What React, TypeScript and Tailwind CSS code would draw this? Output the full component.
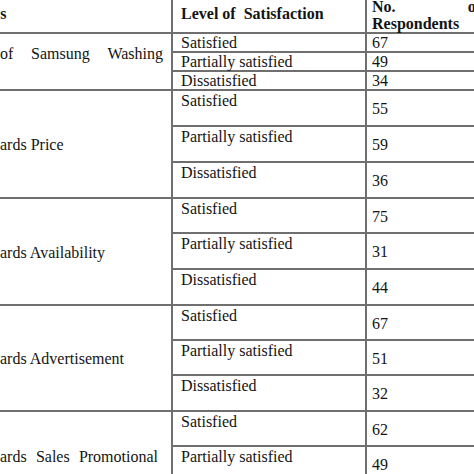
type Row = { level: string; count: string; h: string };

type Group = {
  kind: "justified" | "single";
  words: string[];
  shift: string; // where the visible line starts inside the clipped first column
  width: string;
  twoLines: boolean;
  rows: Row[];
};

// Each group of three answers; heights mirror the scanned table rows.
const groups: Group[] = [
  {
    kind: "justified",
    words: ["of", "Samsung", "Washing"],
    shift: "ml-0",
    width: "w-[163px]",
    twoLines: true,
    rows: [
      { level: "Satisfied", count: "67", h: "h-[19px]" },
      { level: "Partially satisfied", count: "49", h: "h-[19px]" },
      { level: "Dissatisfied", count: "34", h: "h-[19px]" },
    ],
  },
  {
    kind: "single",
    words: ["towards Price"],
    shift: "-ml-[24px]",
    width: "w-auto",
    twoLines: false,
    rows: [
      { level: "Satisfied", count: "55", h: "h-[36px]" },
      { level: "Partially satisfied", count: "59", h: "h-[36px]" },
      { level: "Dissatisfied", count: "36", h: "h-[36px]" },
    ],
  },
  {
    kind: "single",
    words: ["towards Availability"],
    shift: "-ml-[24px]",
    width: "w-auto",
    twoLines: false,
    rows: [
      { level: "Satisfied", count: "75", h: "h-[35px]" },
      { level: "Partially satisfied", count: "31", h: "h-[36px]" },
      { level: "Dissatisfied", count: "44", h: "h-[36px]" },
    ],
  },
  {
    kind: "single",
    words: ["towards Advertisement"],
    shift: "-ml-[24px]",
    width: "w-auto",
    twoLines: false,
    rows: [
      { level: "Satisfied", count: "67", h: "h-[35px]" },
      { level: "Partially satisfied", count: "51", h: "h-[35px]" },
      { level: "Dissatisfied", count: "32", h: "h-[36px]" },
    ],
  },
  {
    kind: "justified",
    words: ["towards", "Sales", "Promotional"],
    shift: "-ml-[24px]",
    width: "w-[182px]",
    twoLines: true,
    rows: [
      { level: "Satisfied", count: "62", h: "h-[35px]" },
      { level: "Partially satisfied", count: "49", h: "h-[36px]" },
      { level: "Dissatisfied", count: "39", h: "h-[36px]" },
    ],
  },
];

function GroupBlock({ g, small }: { g: Group; small: boolean }) {
  return (
    <div className="flex">
      <div className="w-[173px] shrink-0 border-r-2 border-b-2 border-[#6f6f6f] overflow-hidden flex flex-col justify-center pt-[2px]">
        <div
          className={`${g.shift} ${g.width} whitespace-nowrap leading-[18px] flex ${
            g.kind === "justified" ? "justify-between" : ""
          }`}
        >
          {g.words.map((w) => (
            <span key={w}>{w}</span>
          ))}
        </div>
        {g.twoLines && <div className="h-[18px]" />}
      </div>
      <div className="flex flex-col">
        {g.rows.map((r) => (
          <div key={r.level} className={`flex ${r.h} border-b-2 border-[#6f6f6f]`}>
            <div
              className={`w-[194px] shrink-0 border-r-2 border-[#6f6f6f] pl-[8px] whitespace-nowrap ${
                small ? "leading-[17px]" : "leading-[18px] pt-[1px]"
              }`}
            >
              {r.level}
            </div>
            <div
              className={`w-[120px] shrink-0 pl-[5px] flex items-center leading-[18px] ${
                small ? "" : "pt-[2px]"
              }`}
            >
              {r.count}
            </div>
          </div>
        ))}
      </div>
    </div>
  );
}

export default function App() {
  return (
    <div className="w-[474px] h-[474px] overflow-hidden bg-white text-[16px] text-[#141414] font-['Liberation_Serif',serif]">
      <div className="w-[487px] flex flex-col">
        {/* header */}
        <div className="flex h-[34px] border-b-2 border-[#6f6f6f] font-bold">
          <div className="w-[173px] shrink-0 border-r-2 border-[#6f6f6f] overflow-hidden flex items-center pb-[4px]">
            <span className="-ml-[70px] whitespace-nowrap">Particulars</span>
          </div>
          <div className="w-[194px] shrink-0 border-r-2 border-[#6f6f6f] pl-[8px] flex items-center pb-[4px] whitespace-nowrap">
            Level of&nbsp; Satisfaction
          </div>
          <div className="w-[120px] shrink-0 pl-[5px] pr-[6px] flex flex-col justify-center leading-[17px] pb-[2px]">
            <div className="flex justify-between">
              <span>No.</span>
              <span>of</span>
            </div>
            <div>Respondents</div>
          </div>
        </div>

        {groups.map((g, i) => (
          <GroupBlock key={i} g={g} small={i === 0} />
        ))}
      </div>
    </div>
  );
}
